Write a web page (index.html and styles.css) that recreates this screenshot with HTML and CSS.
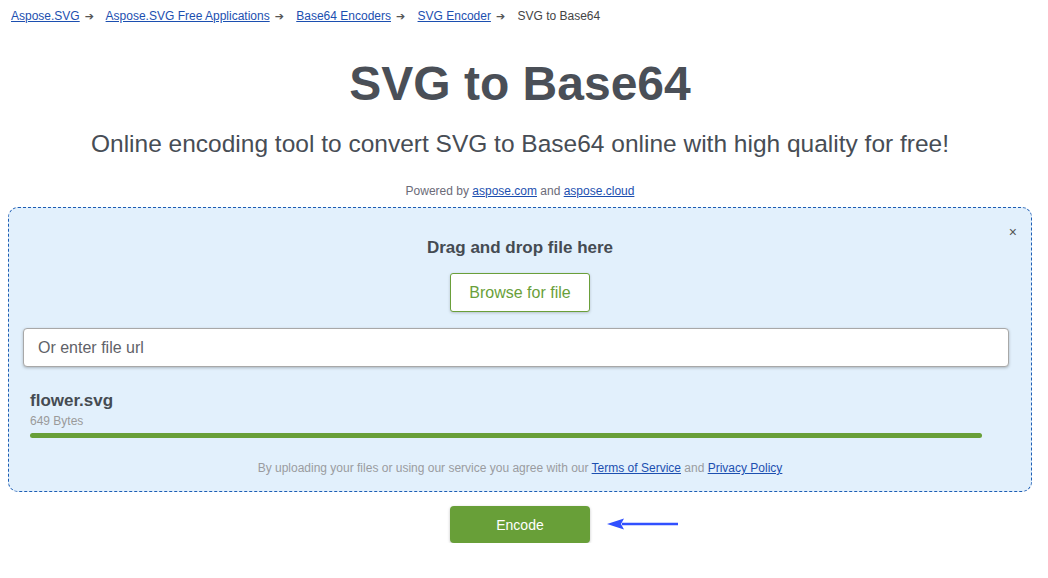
FILE: index.html
```html
<!DOCTYPE html>
<html lang="en">
<head>
<meta charset="utf-8">
<title>SVG to Base64</title>
<link rel="stylesheet" href="styles.css">
</head>
<body>
<nav class="crumbs">
  <a href="#">Aspose.SVG</a><span class="sep">➔</span>
  <a href="#">Aspose.SVG Free Applications</a><span class="sep">➔</span>
  <a href="#">Base64 Encoders</a><span class="sep">➔</span>
  <a href="#">SVG Encoder</a><span class="sep">➔</span>
  <span class="current">SVG to Base64</span>
</nav>
<h1 class="title">SVG to Base64</h1>
<p class="subtitle">Online encoding tool to convert SVG to Base64 online with high quality for free!</p>
<p class="powered">Powered by <a href="#">aspose.com</a> and <a href="#">aspose.cloud</a></p>

<section class="dropzone">
  <span class="close">×</span>
  <div class="drag">Drag and drop file here</div>
  <div class="browse-row"><button class="browse">Browse for file</button></div>
  <input class="url" type="text" placeholder="Or enter file url">
  <div class="file">
    <div class="file-name">flower.svg</div>
    <div class="file-size">649 Bytes</div>
    <div class="bar"></div>
  </div>
  <p class="terms">By uploading your files or using our service you agree with our <a href="#">Terms of Service</a> and <a href="#">Privacy Policy</a></p>
</section>

<div class="action">
  <button class="encode">Encode</button>
  <svg class="pointer" width="74" height="14" viewBox="0 0 74 14">
    <path d="M16 7 H72" stroke="#3150ff" stroke-width="2.4" fill="none"/>
    <path d="M1 7 L18 1.5 L15 7 L18 12.5 Z" fill="#3150ff"/>
  </svg>
</div>
</body>
</html>
```
FILE: styles.css
```css
* { box-sizing: border-box; }

body {
  margin: 8px 16px 8px 8px;
  font-family: "Liberation Sans", Arial, sans-serif;
  color: #444a50;
  background: #fff;
}

a { color: #1c4fb0; text-decoration: underline; }

.crumbs {
  font-size: 12px;
  line-height: 16px;
  padding-left: 3px;
  white-space: nowrap;
}
.crumbs .sep {
  font-family: "DejaVu Sans", sans-serif;
  font-size: 11px;
  color: #555;
  margin: 0 9px 0 5px;
}
.crumbs .current { color: #444; }

.title {
  margin: 35px 0 0;
  font-size: 48px;
  line-height: 48px;
  font-weight: bold;
  text-align: center;
  color: #4a4f57;
}

.subtitle {
  margin: 22px 0 0;
  font-size: 24.5px;
  line-height: 28px;
  text-align: center;
  color: #474d55;
}

.powered {
  margin: 25px 0 0;
  font-size: 12px;
  line-height: 16px;
  text-align: center;
  color: #6b6b78;
}

.dropzone {
  position: relative;
  margin-top: 8px;
  height: 285px;
  border: 1px dashed #1d5db4;
  border-radius: 10px;
  background: #e2f0fc;
  padding: 29px 0 14px;
  display: flex;
  flex-direction: column;
}

.close {
  position: absolute;
  top: 16px;
  right: 14px;
  font-size: 14px;
  line-height: 16px;
  color: #555;
}

.drag {
  font-size: 17px;
  line-height: 22px;
  font-weight: bold;
  text-align: center;
  color: #454b52;
}

.browse-row {
  display: flex;
  justify-content: center;
  margin-top: 14px;
}
.browse {
  width: 140px;
  height: 39px;
  background: #fff;
  border: 1px solid #6a9f3a;
  border-radius: 3px;
  box-shadow: 0 1px 3px rgba(0,0,0,0.2);
  color: #6a9f3a;
  font-family: "Liberation Sans", Arial, sans-serif;
  font-size: 16px;
  padding: 0;
}

.url {
  display: block;
  margin: 16px 22px 0 14px;
  height: 39px;
  border: 1px solid #a8a8a8;
  border-radius: 4px;
  box-shadow: 0 1px 3px rgba(0,0,0,0.25);
  background: #fff;
  padding: 0 14px;
  font-family: "Liberation Sans", Arial, sans-serif;
  font-size: 16px;
  color: #555;
  outline: none;
}
.url::placeholder { color: #5f6268; }

.file {
  margin: 23px 49px 0 21px;
}
.file-name {
  font-size: 17px;
  line-height: 22px;
  font-weight: bold;
  color: #454b52;
}
.file-size {
  margin-top: 2px;
  font-size: 12px;
  line-height: 14px;
  color: #9a9a9a;
}
.bar {
  margin-top: 5px;
  height: 5px;
  border-radius: 3px;
  background: #689f38;
}

.terms {
  margin: 22px 0 0;
  font-size: 12px;
  line-height: 16px;
  text-align: center;
  color: #9a9ca0;
}

.action {
  position: relative;
  display: flex;
  justify-content: center;
  margin-top: 14px;
}
.encode {
  width: 140px;
  height: 37px;
  border: none;
  border-radius: 4px;
  background: #689f38;
  box-shadow: 0 1px 3px rgba(0,0,0,0.25);
  color: #fff;
  font-family: "Liberation Sans", Arial, sans-serif;
  font-size: 14px;
  padding: 0;
}
.pointer {
  position: absolute;
  left: calc(50% + 86px);
  top: 11px;
}
```
